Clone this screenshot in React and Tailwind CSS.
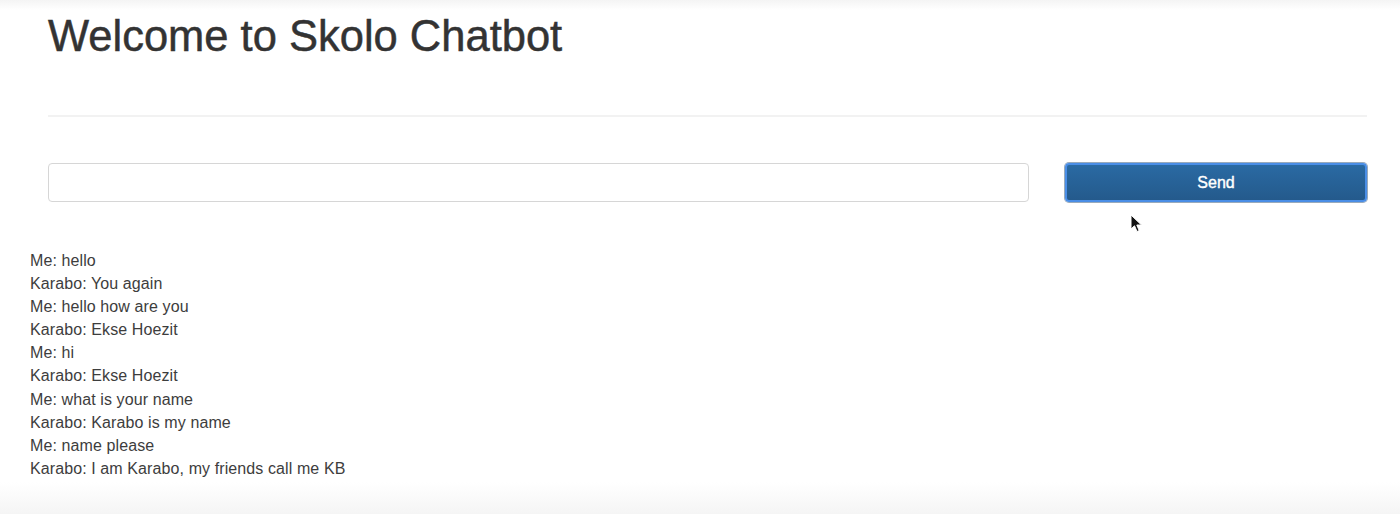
const messages = [
  'Me: hello',
  'Karabo: You again',
  'Me: hello how are you',
  'Karabo: Ekse Hoezit',
  'Me: hi',
  'Karabo: Ekse Hoezit',
  'Me: what is your name',
  'Karabo: Karabo is my name',
  'Me: name please',
  'Karabo: I am Karabo, my friends call me KB',
];

// Mouse pointer overlay
const Cursor = () => (
  <svg className="absolute left-[1130px] top-[214px]" width="14" height="20" viewBox="0 0 14 20">
    <path d="M1 1 L1 15 L4.5 11.8 L7 17.5 L9.2 16.6 L6.8 11 L11.5 11 Z" fill="#111" stroke="#fff" strokeWidth="1" />
  </svg>
);

export default function App() {
  return (
    <div className="relative w-[1400px] h-[514px] bg-white overflow-hidden font-['Liberation_Sans',Arial,sans-serif] text-[#333]">
      <div className="h-[10px] bg-gradient-to-b from-[#f4f4f4] to-white" />
      <div className="px-[48px] pr-[33px]">
        <h1 className="text-[43.5px] leading-[52px] font-normal text-[#333] [-webkit-text-stroke:0.5px_#333]">Welcome to Skolo Chatbot</h1>
        <hr className="mt-[53px] border-t-2 border-[#f2f2f2]" />
        <div className="mt-[46px] flex items-center gap-[36px]">
          <input
            type="text"
            className="flex-1 h-[39px] rounded-[4px] border border-[#d6d6d6] bg-white px-3 outline-none"
          />
          <button className="w-[302px] h-[39px] rounded-[4px] border-2 border-[#4a8ee6] ring-1 ring-[#9ab] bg-gradient-to-b from-[#2a6aa3] to-[#245a8c] text-white text-[16px] [-webkit-text-stroke:0.4px_#fff]">
            Send
          </button>
        </div>
      </div>
      <div className="mt-[47px] pl-[30px] text-[16px] leading-[23.1px] tracking-[0.1px] text-[#3d3d3d]">
        {messages.map((m, i) => (
          <div key={i}>{m}</div>
        ))}
      </div>
      <div className="absolute left-0 right-0 bottom-0 h-[32px] bg-gradient-to-b from-white to-[#f5f5f5]" />
      <Cursor />
    </div>
  );
}
